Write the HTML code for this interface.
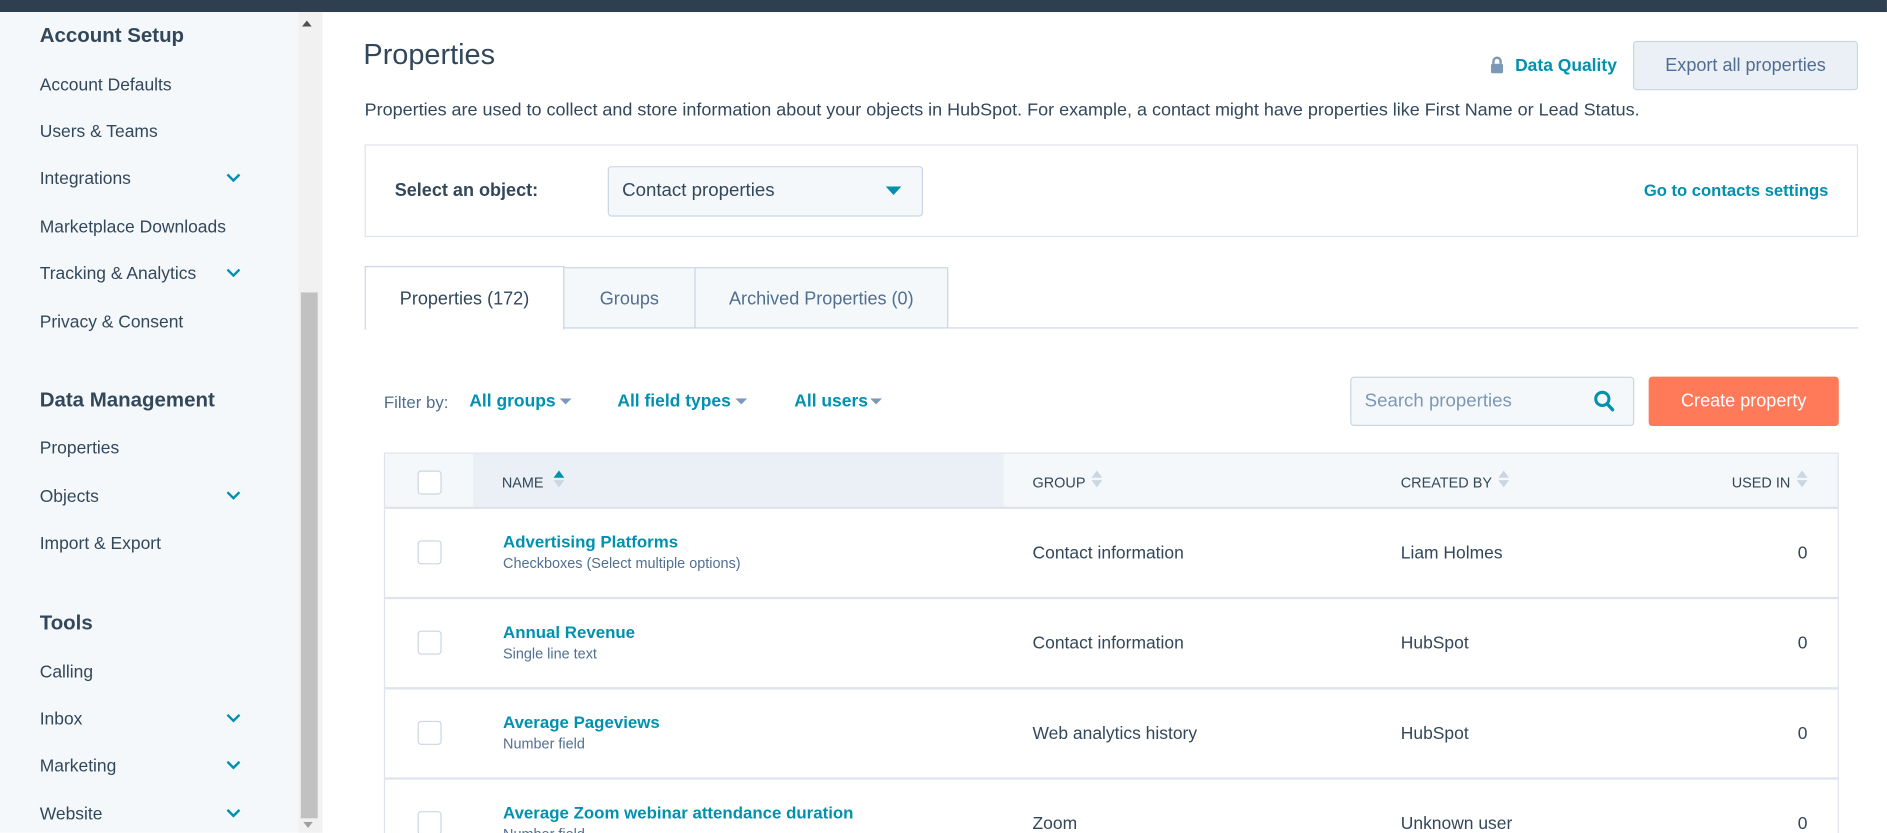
<!DOCTYPE html>
<html><head><meta charset="utf-8"><style>
*{box-sizing:border-box;margin:0;padding:0}
html,body{width:1887px;height:833px;overflow:hidden;background:#fff}
#w{width:1568px;height:692px;position:relative;transform:scale(1.2034);transform-origin:0 0;font-family:"Liberation Sans",sans-serif;color:#33475b}
.a{position:absolute;white-space:nowrap}
.side{left:0;top:10px;width:248px;height:682px;background:#f5f8fa}
.si{position:absolute;left:33px;font-size:14.5px;color:#33475b;transform:translateY(-50%)}
.sh{position:absolute;left:33px;font-size:17px;font-weight:bold;color:#33475b;transform:translateY(-50%)}
.chev{position:absolute;left:187px;width:14px;height:10px;transform:translateY(-50%)}
.teal{color:#0091ae;font-weight:bold}
.cb{position:absolute;left:27px;width:20px;height:20px;border:1.5px solid #cbd6e2;border-radius:3px;background:#fff}
.row{position:absolute;left:319px;width:1209px;height:75px;border-bottom:2px solid #dfe3eb;border-left:1px solid #dfe3eb;border-right:1px solid #dfe3eb;background:#fff}
.nm{position:absolute;left:98px;top:19px;font-size:14px;font-weight:bold;color:#0091ae}
.sub{position:absolute;left:98px;top:38px;font-size:12px;color:#516f90}
.c2{position:absolute;left:538px;top:29px;font-size:14.5px}
.c3{position:absolute;left:844px;top:29px;font-size:14.5px}
.c4{position:absolute;right:25px;top:29px;font-size:14.5px}
.th{position:absolute;top:17px;font-size:12px;color:#33475b}
</style></head><body><div id="w">
<div class="a" style="left:0;top:0;width:1568px;height:10px;background:#2e3f50"></div>
<div class="a side">
<div class="sh" style="top:20px">Account Setup</div>
<div class="si" style="top:61px">Account Defaults</div>
<div class="si" style="top:100px">Users &amp; Teams</div>
<div class="si" style="top:139px">Integrations</div>
<div class="si" style="top:179px">Marketplace Downloads</div>
<div class="si" style="top:218px">Tracking &amp; Analytics</div>
<div class="si" style="top:258px">Privacy &amp; Consent</div>
<div class="sh" style="top:323px">Data Management</div>
<div class="si" style="top:363px">Properties</div>
<div class="si" style="top:403px">Objects</div>
<div class="si" style="top:442px">Import &amp; Export</div>
<div class="sh" style="top:508px">Tools</div>
<div class="si" style="top:549px">Calling</div>
<div class="si" style="top:588px">Inbox</div>
<div class="si" style="top:627px">Marketing</div>
<div class="si" style="top:667px">Website</div>
<svg class="chev" style="top:138px" viewBox="0 0 14 10"><path d="M2 2l5 5 5-5" fill="none" stroke="#0091ae" stroke-width="2"/></svg>
<svg class="chev" style="top:217px" viewBox="0 0 14 10"><path d="M2 2l5 5 5-5" fill="none" stroke="#0091ae" stroke-width="2"/></svg>
<svg class="chev" style="top:402px" viewBox="0 0 14 10"><path d="M2 2l5 5 5-5" fill="none" stroke="#0091ae" stroke-width="2"/></svg>
<svg class="chev" style="top:587px" viewBox="0 0 14 10"><path d="M2 2l5 5 5-5" fill="none" stroke="#0091ae" stroke-width="2"/></svg>
<svg class="chev" style="top:626px" viewBox="0 0 14 10"><path d="M2 2l5 5 5-5" fill="none" stroke="#0091ae" stroke-width="2"/></svg>
<svg class="chev" style="top:666px" viewBox="0 0 14 10"><path d="M2 2l5 5 5-5" fill="none" stroke="#0091ae" stroke-width="2"/></svg>
</div>
<div class="a" style="left:248px;top:10px;width:18px;height:682px;background:#f1f1f1"></div>
<div class="a" style="left:250px;top:243px;width:14px;height:437px;background:#c1c1c1"></div>
<svg class="a" style="left:251px;top:16px" width="8" height="6"><path d="M0 6L4 1L8 6Z" fill="#505050"/></svg>
<svg class="a" style="left:252px;top:683px" width="8" height="6"><path d="M0 0L4 5L8 0Z" fill="#a0a0a0"/></svg>
<div class="a" style="left:266px;top:10px;width:2px;height:682px;background:#eef0f3"></div>

<div class="a" style="left:302px;top:32px;font-size:24px;color:#33475b">Properties</div>
<svg class="a" style="left:1238px;top:47px" width="12" height="14" viewBox="0 0 12 14"><path d="M3 6V4a3 3 0 0 1 6 0v2" fill="none" stroke="#7c98b6" stroke-width="2"/><rect x="1" y="6" width="10" height="8" rx="1.5" fill="#7c98b6"/></svg>
<div class="a teal" style="left:1259px;top:47px;font-size:14.5px">Data Quality</div>
<div class="a" style="left:1357px;top:34px;width:187px;height:41px;background:#eaf0f6;border:1px solid #cbd6e2;border-radius:3px;font-size:15px;color:#506e91;text-align:center;line-height:40px">Export all properties</div>
<div class="a" style="left:303px;top:83px;font-size:14.95px;color:#33475b">Properties are used to collect and store information about your objects in HubSpot. For example, a contact might have properties like First Name or Lead Status.</div>

<div class="a" style="left:303px;top:120px;width:1241px;height:77px;border:1px solid #dfe3eb"></div>
<div class="a" style="left:328px;top:150px;font-size:15px;font-weight:bold">Select an object:</div>
<div class="a" style="left:505px;top:138px;width:262px;height:42px;background:#f5f8fa;border:1px solid #cbd6e2;border-radius:3px"></div>
<div class="a" style="left:517px;top:150px;font-size:15.5px">Contact properties</div>
<svg class="a" style="left:736px;top:155px" width="13" height="8"><path d="M0 0h13L6.5 7Z" fill="#0091ae"/></svg>
<div class="a teal" style="left:1366px;top:151px;font-size:13.8px">Go to contacts settings</div>

<div class="a" style="left:303px;top:272px;width:1241px;height:1px;background:#cbd6e2"></div>
<div class="a" style="left:303px;top:221px;width:166px;height:53px;background:#fff;border:1px solid #cbd6e2;border-bottom:none;font-size:15px;text-align:center;line-height:54px">Properties (172)</div>
<div class="a" style="left:468px;top:222px;width:110px;height:51px;background:#f5f8fa;border:1px solid #cbd6e2;font-size:15px;text-align:center;line-height:52px;color:#516f90">Groups</div>
<div class="a" style="left:577px;top:222px;width:211px;height:51px;background:#f5f8fa;border:1px solid #cbd6e2;font-size:15px;text-align:center;line-height:52px;color:#516f90">Archived Properties (0)</div>

<div class="a" style="left:319px;top:326px;font-size:14px;color:#516f90">Filter by:</div>
<div class="a teal" style="left:390px;top:326px;font-size:14.5px">All groups</div>
<svg class="a" style="left:465px;top:331px" width="10" height="6"><path d="M0 0h10L5 5Z" fill="#7c98b6"/></svg>
<div class="a teal" style="left:513px;top:326px;font-size:14.5px">All field types</div>
<svg class="a" style="left:611px;top:331px" width="10" height="6"><path d="M0 0h10L5 5Z" fill="#7c98b6"/></svg>
<div class="a teal" style="left:660px;top:326px;font-size:14.5px">All users</div>
<svg class="a" style="left:723px;top:331px" width="10" height="6"><path d="M0 0h10L5 5Z" fill="#7c98b6"/></svg>
<div class="a" style="left:1122px;top:313px;width:236px;height:41px;background:#f5f8fa;border:1px solid #cbd6e2;border-radius:3px"></div>
<div class="a" style="left:1134px;top:325px;font-size:15.5px;color:#7c98b6">Search properties</div>
<svg class="a" style="left:1324px;top:324px" width="18" height="19" viewBox="0 0 18 19"><circle cx="7.5" cy="7.5" r="5.5" fill="none" stroke="#0091ae" stroke-width="2.5"/><path d="M11.5 11.5L16 16.5" stroke="#0091ae" stroke-width="2.8" stroke-linecap="round"/></svg>
<div class="a" style="left:1370px;top:313px;width:158px;height:41px;background:#ff7a59;border-radius:3px;color:#fff;font-size:15px;text-align:center;line-height:42px">Create property</div>

<div class="a" style="left:319px;top:376px;width:1209px;height:47px;background:#f5f8fa;border:1px solid #dfe3eb;border-bottom:2px solid #dfe3eb">
<div class="a" style="left:73px;top:0;width:441px;height:44px;background:#eaf0f6"></div>
<div class="cb" style="top:14px"></div>
<div class="th" style="left:97px">NAME</div>
<svg class="a" style="left:140px;top:14px" width="9" height="14"><path d="M0 6L4.5 0L9 6Z" fill="#0091ae"/><path d="M0 8L4.5 14L9 8Z" fill="#cbd6e2"/></svg>
<div class="th" style="left:538px">GROUP</div>
<svg class="a" style="left:587px;top:14px" width="9" height="14"><path d="M0 6L4.5 0L9 6Z" fill="#cbd6e2"/><path d="M0 8L4.5 14L9 8Z" fill="#cbd6e2"/></svg>
<div class="th" style="left:844px">CREATED BY</div>
<svg class="a" style="left:925px;top:14px" width="9" height="14"><path d="M0 6L4.5 0L9 6Z" fill="#cbd6e2"/><path d="M0 8L4.5 14L9 8Z" fill="#cbd6e2"/></svg>
<div class="th" style="left:1119px">USED IN</div>
<svg class="a" style="left:1173px;top:14px" width="9" height="14"><path d="M0 6L4.5 0L9 6Z" fill="#cbd6e2"/><path d="M0 8L4.5 14L9 8Z" fill="#cbd6e2"/></svg>
</div>

<div class="row" style="top:423px"><div class="cb" style="top:26px"></div><div class="nm">Advertising Platforms</div><div class="sub">Checkboxes (Select multiple options)</div><div class="c2">Contact information</div><div class="c3">Liam Holmes</div><div class="c4">0</div></div>
<div class="row" style="top:498px"><div class="cb" style="top:26px"></div><div class="nm">Annual Revenue</div><div class="sub">Single line text</div><div class="c2">Contact information</div><div class="c3">HubSpot</div><div class="c4">0</div></div>
<div class="row" style="top:573px"><div class="cb" style="top:26px"></div><div class="nm">Average Pageviews</div><div class="sub">Number field</div><div class="c2">Web analytics history</div><div class="c3">HubSpot</div><div class="c4">0</div></div>
<div class="row" style="top:648px;border-bottom:none"><div class="cb" style="top:26px"></div><div class="nm">Average Zoom webinar attendance duration</div><div class="sub">Number field</div><div class="c2">Zoom</div><div class="c3">Unknown user</div><div class="c4">0</div></div>
</div></body></html>
